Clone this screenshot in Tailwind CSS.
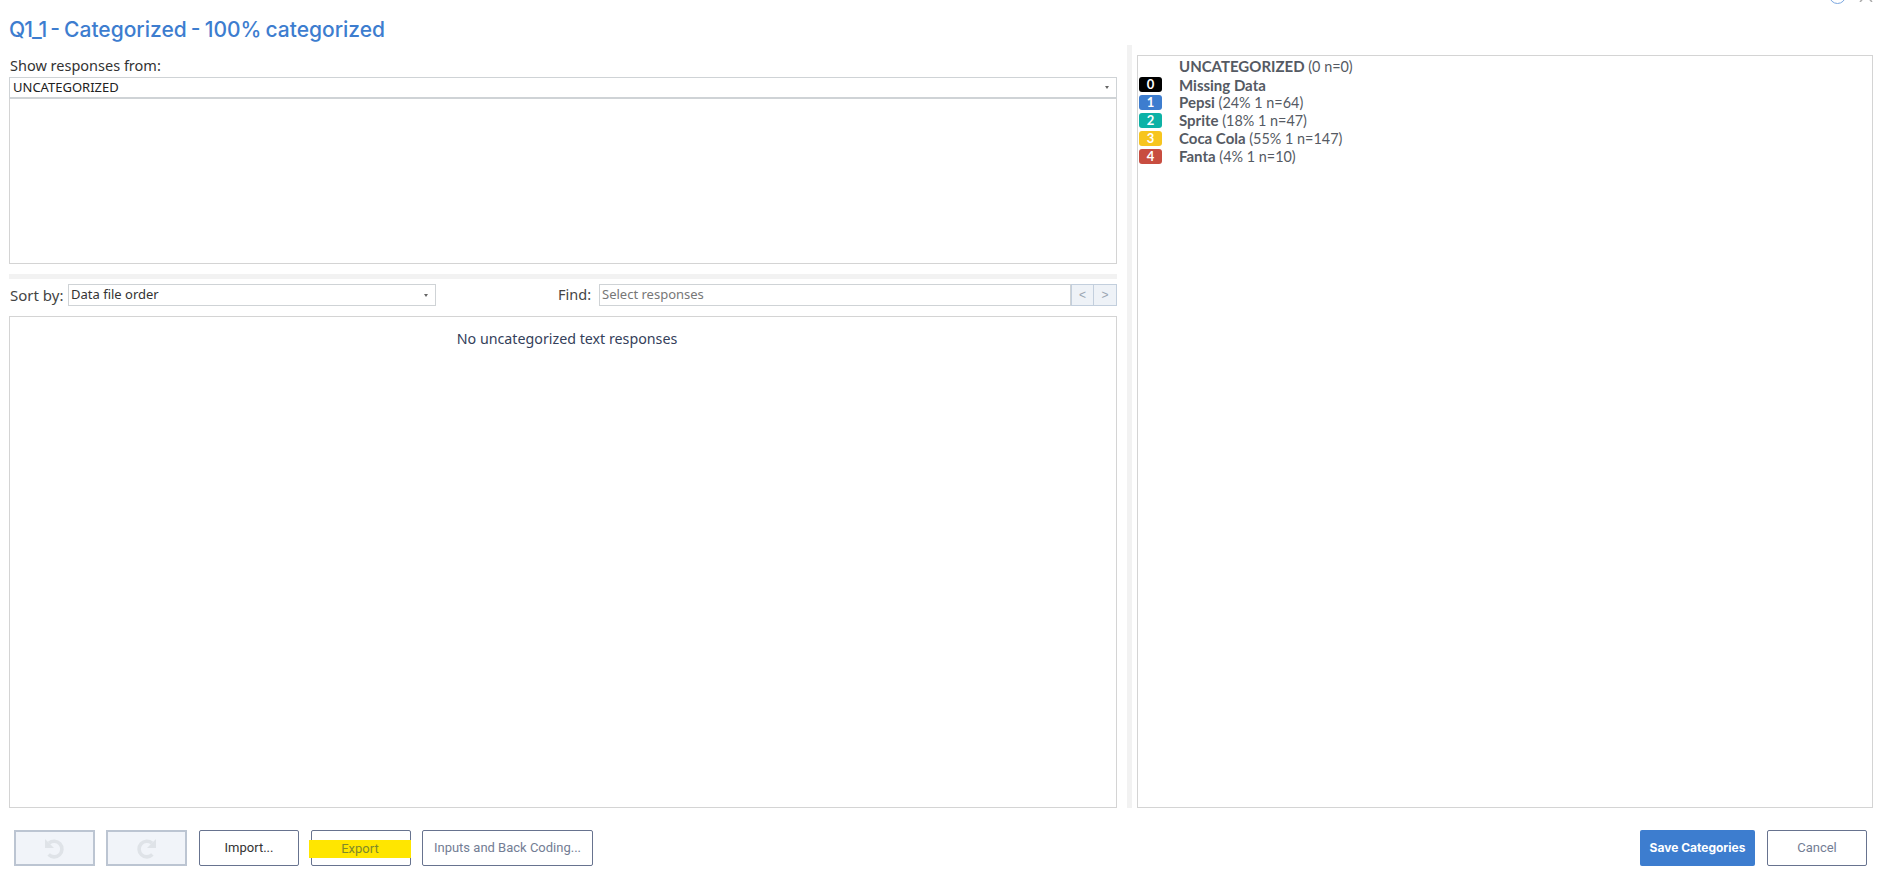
<!DOCTYPE html>
<html lang="en">
<head>
    <meta charset="UTF-8">
    <title>Q1_1 - Categorized</title>
    <script src="https://cdn.jsdelivr.net/npm/@tailwindcss/browser@4"></script>
</head>
<body class="bg-white">
<div class="relative w-[1887px] h-[881px] overflow-hidden bg-white flex flex-col font-['Noto_Sans',sans-serif]">
    <!-- clipped help and close icons at the top edge -->
    <div class="absolute top-[-13px] left-[1829px] flex items-start gap-[13px]">
        <div class="w-[17px] h-[17px] rounded-full border border-[#7ba7e0]"></div>
        <svg width="14" height="15" viewBox="0 0 14 15" stroke="#aaaaaa" stroke-width="1.5"><path d="M1 1 13 15M13 1 1 15"/></svg>
    </div>

    <h1 class="h-[46px] pl-[9px] pt-[16px] text-[21px] leading-[27px] font-medium text-[#3d7dcf] font-['Inter',sans-serif] [word-spacing:-1.5px]"><span class="tracking-[-1px]">Q1_1</span> - Categorized - 100% categorized</h1>

    <div class="flex h-[762px] pl-[9px]">
        <!-- left side -->
        <div class="w-[1108px] pt-[10px] flex flex-col">
            <div class="h-[21px] pl-[1px] text-[14.5px] leading-[18px] text-[#333333]">Show responses from:</div>
            <div class="h-[22px] border border-[#cfd3d6] border-b-2 flex items-center justify-between pl-[3px] pr-[7px] text-[13px] text-[#222222]">
                <span class="pt-[1px]">UNCATEGORIZED</span>
                <span class="w-0 h-0 border-x-[2.5px] border-x-transparent border-t-[3px] border-t-[#666666]"></span>
            </div>
            <div class="h-[165px] border border-t-0 border-[#d4d4d4]"></div>
            <div class="h-[5px] mt-[10px] bg-[#f2f2f2]"></div>
            <div class="h-[22px] mt-[5px] flex items-center">
                <span class="w-[59px] pl-[1px] text-[15px] text-[#444444]">Sort by:</span>
                <div class="w-[368px] h-[22px] border border-[#cfd3d6] flex items-center justify-between pl-[2px] pr-[7px] text-[13px] text-[#333333]">
                    <span>Data file order</span>
                    <span class="w-0 h-0 border-x-[2.5px] border-x-transparent border-t-[3px] border-t-[#666666]"></span>
                </div>
                <span class="ml-[122px] w-[41px] text-[14.5px] text-[#444444]">Find:</span>
                <div class="w-[472px] h-[22px] border border-[#cfd3d6] flex items-center pl-[2px] text-[13px] text-[#777777]">Select responses</div>
                <div class="w-[23px] h-[22px] border border-[#c3cfdd] bg-[#eef2f7] flex items-center justify-center text-[12px] text-[#9aa5b1] font-['Liberation_Sans']">&lt;</div>
                <div class="w-[23px] h-[22px] border border-l-0 border-[#c3cfdd] bg-[#eef2f7] flex items-center justify-center text-[12px] text-[#9aa5b1] font-['Liberation_Sans']">&gt;</div>
            </div>
            <div class="flex-1 mt-[10px] border border-[#d4d4d4] pt-[12px] pl-[8px] text-center text-[14.25px] leading-[20px] text-[#34405a]">No uncategorized text responses</div>
        </div>

        <div class="w-[5px] ml-[10px] bg-[#f2f2f2] mt-[-1px]"></div>

        <!-- right side -->
        <div class="w-[736px] ml-[5px] mt-[9px] border border-[#d4d4d4] pt-[1px] text-[14.4px] leading-[18px] text-[#555a63] font-['Lato',sans-serif]">
            <div class="h-[18px] flex items-center"><span class="w-[41px]"></span><span><b class="font-bold text-[15px]">UNCATEGORIZED</b> (0 n=0)</span></div>
            <div class="h-[18px] flex items-center"><span class="w-[23px] h-[15px] ml-[1px] mr-[17px] rounded-[3px] bg-black text-white text-[13px] leading-[15px] font-bold text-center">0</span><b class="pt-[1px] font-bold text-[15px]">Missing Data</b></div>
            <div class="h-[18px] flex items-center"><span class="w-[23px] h-[15px] ml-[1px] mr-[17px] rounded-[3px] bg-[#3d7dcf] text-white text-[13px] leading-[15px] font-bold text-center">1</span><span class="pt-[1px]"><b class="font-bold text-[15px]">Pepsi</b> (24% 1 n=64)</span></div>
            <div class="h-[18px] flex items-center"><span class="w-[23px] h-[15px] ml-[1px] mr-[17px] rounded-[3px] bg-[#0db2a6] text-white text-[13px] leading-[15px] font-bold text-center">2</span><span class="pt-[1px]"><b class="font-bold text-[15px]">Sprite</b> (18% 1 n=47)</span></div>
            <div class="h-[18px] flex items-center"><span class="w-[23px] h-[15px] ml-[1px] mr-[17px] rounded-[3px] bg-[#f7c51e] text-white text-[13px] leading-[15px] font-bold text-center">3</span><span class="pt-[1px]"><b class="font-bold text-[15px]">Coca Cola</b> (55% 1 n=147)</span></div>
            <div class="h-[18px] flex items-center"><span class="w-[23px] h-[15px] ml-[1px] mr-[17px] rounded-[3px] bg-[#c84d40] text-white text-[13px] leading-[15px] font-bold text-center">4</span><span class="pt-[1px]"><b class="font-bold text-[15px]">Fanta</b> (4% 1 n=10)</span></div>
        </div>
    </div>

    <!-- footer buttons -->
    <div class="flex items-center mt-[22px] pl-[14px] pr-[20px] font-['Roboto',sans-serif] text-[13px]">
        <button class="w-[81px] h-[36px] border-2 border-[#bcc5d2] bg-[#f1f4f9] flex items-center justify-center">
            <svg width="21" height="21" viewBox="0 0 21 21" fill="none" stroke="#dfe3e8" stroke-width="3.6"><path d="M5 5.2A7.8 7.8 0 1 1 4.6 16.6"/><path d="M1 1V10H10Z" fill="#dfe3e8" stroke="none"/></svg>
        </button>
        <button class="w-[81px] h-[36px] ml-[11px] border-2 border-[#bcc5d2] bg-[#f1f4f9] flex items-center justify-center">
            <svg width="21" height="21" viewBox="0 0 21 21" fill="none" stroke="#dfe3e8" stroke-width="3.6"><path d="M16 5.2A7.8 7.8 0 1 0 16.4 16.6"/><path d="M20 1V10H11Z" fill="#dfe3e8" stroke="none"/></svg>
        </button>
        <button class="w-[100px] h-[36px] ml-[12px] border border-[#67738f] rounded-[2px] text-[#333333]">Import...</button>
        <div class="relative w-[100px] h-[36px] ml-[12px]">
            <button class="w-full h-full border border-[#67738f] rounded-[2px]"></button>
            <div class="absolute left-[-2px] right-0 top-[10px] h-[18px] bg-[#ffe600] text-center text-[13px] leading-[18px] text-[#7f8a2a]">Export</div>
        </div>
        <button class="w-[171px] h-[36px] ml-[11px] border border-[#67738f] rounded-[2px] text-[#737d94]">Inputs and Back Coding...</button>
        <button class="w-[115px] h-[36px] ml-auto bg-[#3d7dcf] rounded-[2px] text-white font-bold text-[12px] font-['Inter',sans-serif]">Save Categories</button>
        <button class="w-[100px] h-[36px] ml-[12px] border border-[#67738f] rounded-[2px] text-[#737d94]">Cancel</button>
    </div>
</div>
</body>
</html>
